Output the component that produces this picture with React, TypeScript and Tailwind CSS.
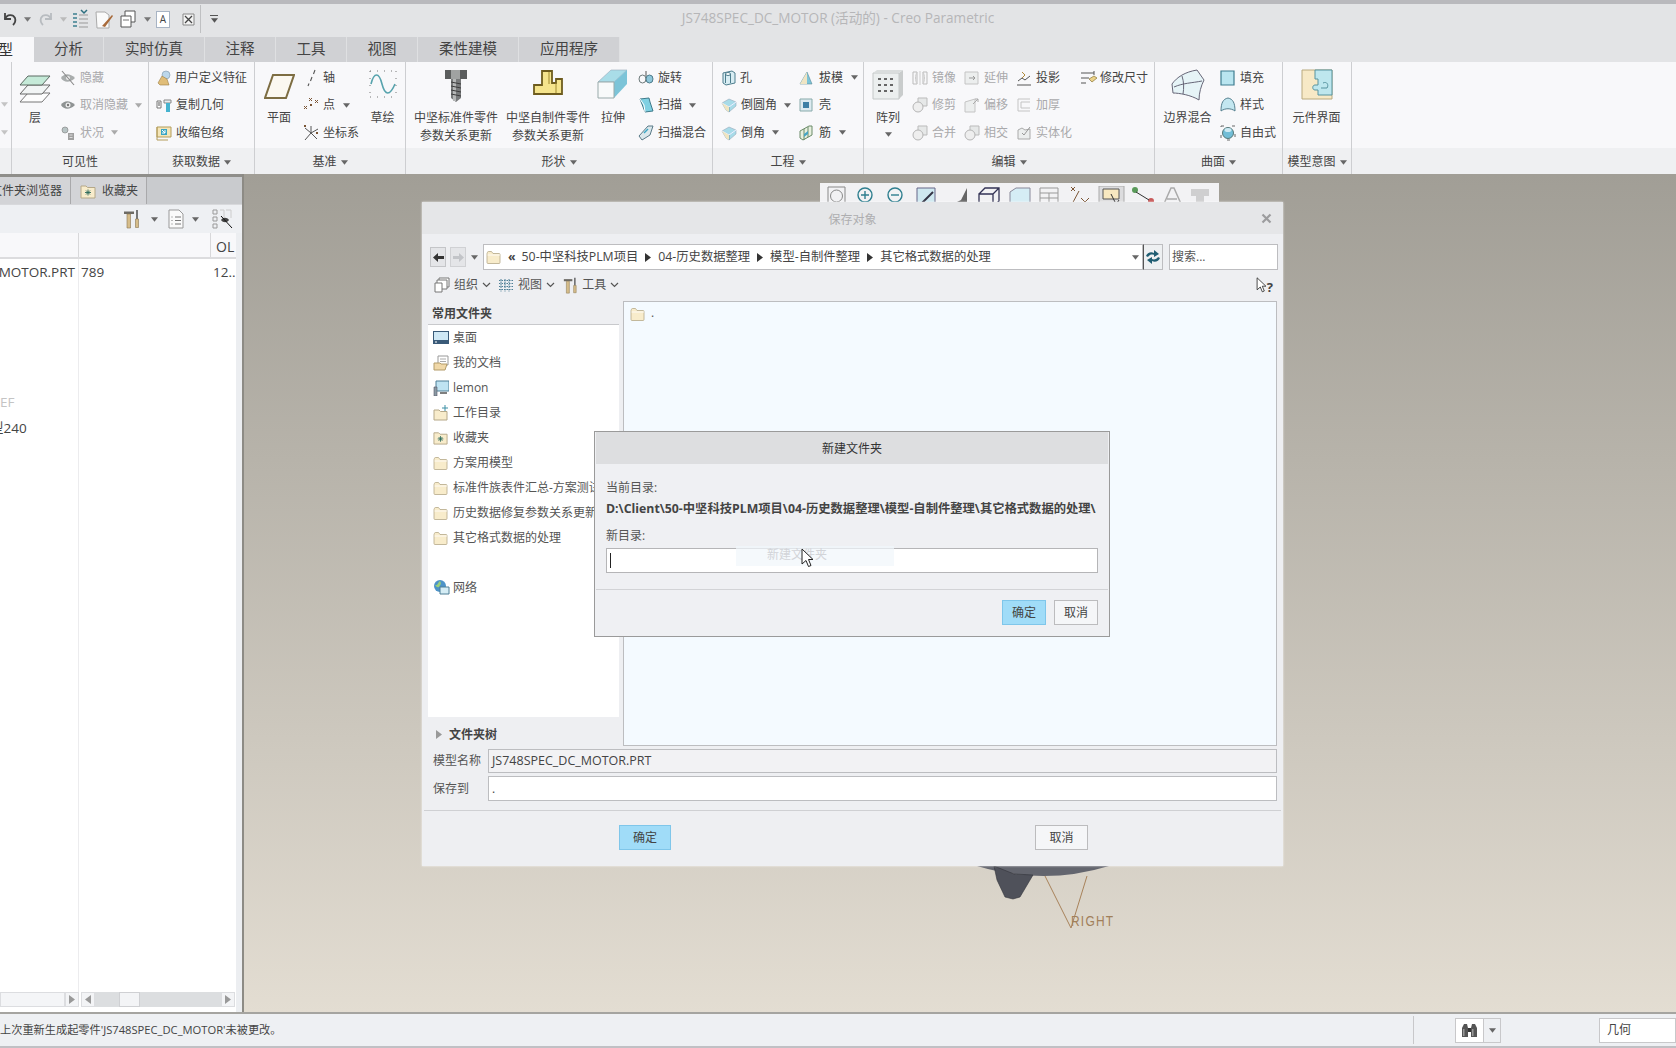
import React from 'react';

const Svg = ({ w = 16, h = 16, vb, children }: { w?: number; h?: number; vb?: string; children: React.ReactNode }) => (
  <svg width={w} height={h} viewBox={vb || `0 0 ${w} ${h}`} fill="none" className="shrink-0">
    {children}
  </svg>
);

const Caret = ({ color = '#666' }: { color?: string }) => (
  <svg width="7" height="5" viewBox="0 0 8 5" className="shrink-0">
    <path d="M0 0h8L4 5z" fill={color} />
  </svg>
);

const Chevron = () => (
  <svg width="9" height="6" viewBox="0 0 9 6" fill="none" className="shrink-0">
    <path d="M1 1l3.500 3.500L8 1" stroke="#555" strokeWidth="1.200" />
  </svg>
);

const Arrow = ({ left = false, color = '#777' }: { left?: boolean; color?: string }) => (
  <svg width="6" height="9" viewBox="0 0 6 9" className="shrink-0">
    <path d={left ? 'M6 0v9L0 4.500z' : 'M0 0v9l6-4.500z'} fill={color} />
  </svg>
);

const Folder = ({ w = 15, h = 14 }: { w?: number; h?: number }) => (
  <Svg w={w} h={h} vb="0 0 15 14">
    <path d="M1 3.500V12.500a1 1 0 001 1h11a1 1 0 001-1V4.500a1 1 0 00-1-1H7L5.500 1.500H2.500a1 1 0 00-1 .8z" fill="#f8eccb" stroke="#b5a888" strokeWidth=".8" />
    <path d="M1.500 5h12.500" stroke="#fff" strokeWidth=".8" />
  </Svg>
);

const Tools = ({ s = 1 }: { s?: number }) => (
  <Svg w={18 * s} h={20 * s} vb="0 0 18 20">
    <path d="M1 2.500h10v2.500H1z" fill="#6c6a64" />
    <path d="M4 5h3.500v14H4z" fill="#d6bd8a" stroke="#8a7650" strokeWidth=".6" />
    <path d="M14 1v9" stroke="#333" strokeWidth="1.300" />
    <path d="M12.500 10h3v8.500h-3z" fill="#d6bd8a" stroke="#8a7650" strokeWidth=".6" />
  </Svg>
);

const DocList = () => (
  <Svg w={16} h={20} vb="0 0 16 20">
    <path d="M1 1h10l4 4v14H1z" fill="#fafafa" stroke="#999" />
    <path d="M3.500 8h1M7 8h6M3.500 11.500h1M7 11.500h6M3.500 15h1M7 15h6" stroke="#777" />
  </Svg>
);

const TreeEye = () => (
  <Svg w={21} h={21}>
    <path d="M1 1h4v4H1zM1 8h4v4H1zM1 15h4v4H1z" stroke="#999" />
    <path d="M8 1h4v9M14 1h5v8" stroke="#ccc" />
    <path d="M9 11c2-3 6-3 8 0-2 3-6 3-8 0z" fill="#444" />
    <path d="M9 7l11 12" stroke="#111" />
  </Svg>
);

const Fav = ({ s = 16 }: { s?: number }) => (
  <Svg w={s} h={s} vb="0 0 16 16">
    <path d="M1 3h5l1.500 1.500H15V15H1z" fill="#f8eccb" stroke="#b5a888" />
    <path d="M5 9.500h6M8 6.500v6M6 7.500l4 4M10 7.500l-4 4" stroke="#2a6a5a" strokeWidth=".9" />
  </Svg>
);

// ---- ribbon icons
const Layers = (
  <Svg w={32} h={30}>
    <path d="M9 19h22l-8 9H1z" fill="#fdfdfd" stroke="#777" />
    <path d="M9 11h22l-8 9H1z" fill="#f2f5f5" stroke="#666" />
    <path d="M9 2h22l-8 9H1z" fill="#c5ead8" stroke="#5c6a62" />
  </Svg>
);
const EyeOff = (
  <Svg>
    <path d="M1 8c3-5 9-5 14 0-5 5-11 5-14 0z" fill="#a9adad" />
    <circle cx="8" cy="8" r="2" fill="#eee" />
    <path d="M2 1l12 14" stroke="#888" strokeWidth="1.100" />
  </Svg>
);
const Eye = (
  <Svg>
    <path d="M1 8c3-5 9-5 14 0-5 5-11 5-14 0z" fill="#8f9393" />
    <circle cx="8" cy="8" r="2.500" fill="#eee" />
    <circle cx="8" cy="8" r="1.200" fill="#777" />
  </Svg>
);
const Status = (
  <Svg>
    <circle cx="5" cy="5" r="3" fill="#b8c4c4" stroke="#888" strokeWidth=".7" />
    <path d="M8 8h6v7H8z" fill="#a0a0a0" />
    <path d="M9.500 10h3M9.500 12.500h3" stroke="#ddd" />
  </Svg>
);
const Udf = (
  <Svg>
    <circle cx="10" cy="5" r="4" fill="#bcd7ea" stroke="#7d96a8" strokeWidth=".6" />
    <path d="M2 13l4-7 5 3 2 6H4z" fill="#e0bd78" stroke="#9b7d45" strokeWidth=".6" />
  </Svg>
);
const CopyGeom = (
  <Svg>
    <path d="M1 4h4v7H1z" fill="#fff" stroke="#777" />
    <path d="M2 6h2M2 8h2" stroke="#555" />
    <path d="M8 3h7v3H8z" fill="#e8eef0" stroke="#888" />
    <path d="M10 6h4v9h-4z" fill="#46b3cf" />
  </Svg>
);
const Shrink = (
  <Svg>
    <path d="M1 2h14v10H1z" fill="#f5e6b8" stroke="#b39c5a" />
    <path d="M1 2v13h11" stroke="#b39c5a" />
    <path d="M5 4h6v6H5z" fill="#3aa5c4" />
    <path d="M6 5l3 3M9 5v3H6" stroke="#fff" />
  </Svg>
);
const Plane = (
  <Svg w={31} h={27}>
    <path d="M9 2h21l-8 23H1z" fill="#fbf8f0" stroke="#7d6d42" strokeWidth="2" />
  </Svg>
);
const Axis = (
  <Svg w={14} h={18}>
    <path d="M11 1L9.500 5M8 8L6.500 12M5 14.500L4 17" stroke="#555" strokeWidth="1.100" />
  </Svg>
);
const Points = (
  <Svg w={17} h={16}>
    <path d="M6 1l3 3M9 1L6 4M12 3l3 3M15 3l-3 3M1 9l3 3M4 9l-3 3M7 7l2 2M9 7L7 9" stroke="#7b5535" />
  </Svg>
);
const Csys = (
  <Svg w={17} h={18}>
    <path d="M8 2v7M8 9l-6 7M8 9l6 6" stroke="#555" />
    <path d="M2 4l6 5 7-4" stroke="#555" />
    <path d="M1 1l2 2M3 1L1 3M13 8l2 2M15 8l-2 2" stroke="#7b5535" />
  </Svg>
);
const Sketch = (
  <Svg w={30} h={30}>
    <path d="M2 2h26M2 28h26M2 2v26M28 2v26" stroke="#777" strokeDasharray="1 6" />
    <path d="M3 15c3-12 8-12 11 0s8 12 13 0" stroke="#57a3ad" strokeWidth="1.600" />
  </Svg>
);
const Bolt = (
  <Svg w={26} h={34}>
    <path d="M2 1h22v9H2z" fill="#5b5d5d" />
    <path d="M8 1h9v9H8z" fill="#a0a2a2" />
    <path d="M8 10h10v19l-5 4-5-4z" fill="#77797a" />
    <path d="M10 10h3v22h-3z" fill="#b5b7b7" />
    <path d="M8 13l10 2M8 17l10 2M8 21l10 2M8 25l10 2" stroke="#3d3d3d" />
  </Svg>
);
const Block = (
  <Svg w={30} h={27}>
    <path d="M1 16h8V2h10v12h4v-4h6v15H1z" fill="#f5e48c" stroke="#6e5c1e" strokeWidth="1.800" />
    <path d="M16 3v12M23 14v10" stroke="#a08a30" />
  </Svg>
);
const Extrude = (
  <Svg w={32} h={30}>
    <path d="M1 13L14 1h16L17 13z" fill="#a9dde8" stroke="#9ab" strokeWidth=".6" />
    <path d="M17 13L30 1v14L17 29z" fill="#7cc4d8" />
    <path d="M1 13h16v16H1z" fill="#f8fafa" stroke="#9aa" />
  </Svg>
);
const Revolve = (
  <Svg>
    <ellipse cx="4.500" cy="9" rx="3.500" ry="4" stroke="#6d7a7a" />
    <ellipse cx="11.500" cy="9" rx="3.500" ry="4" fill="#8fc7da" stroke="#4d7a8a" />
    <path d="M8 1v5" stroke="#555" />
  </Svg>
);
const Sweep = (
  <Svg>
    <path d="M2 2l9-1 1 4 3 9-8 1z" fill="#7fd0e2" stroke="#3d7a8a" />
    <path d="M2 2l4 6 1 7" stroke="#fff" />
  </Svg>
);
const Blend = (
  <Svg>
    <path d="M1 11L10 1h5l-3 9-8 5z" fill="#dbe8ec" stroke="#5a7a88" />
    <path d="M6 8l4-4" stroke="#3aa5c4" strokeWidth="1.500" />
  </Svg>
);
const Hole = (
  <Svg>
    <path d="M2 3l9-2 3 2v10l-9 2-3-2z" fill="#d8edf3" stroke="#4d7d8d" />
    <ellipse cx="7" cy="4" rx="2.500" ry="1.500" fill="#fff" stroke="#4d7d8d" />
    <path d="M4.500 4v9M9.500 4v9" stroke="#4d7d8d" />
  </Svg>
);
const Round = (
  <Svg>
    <path d="M1 6l7-4 7 3v4l-7 6-3-2z" fill="#a8dbe8" stroke="#9ab" strokeWidth=".6" />
    <path d="M1 6l7 4 7-5" stroke="#eef" />
    <path d="M8 10v5" stroke="#69a" />
    <path d="M1 6l4 7 3 2V10z" fill="#f0e5c0" />
  </Svg>
);
const Draft = (
  <Svg>
    <path d="M2 14L9 2l5 12z" fill="#7cc4d8" stroke="#5a8a98" strokeWidth=".6" />
    <path d="M2 14L9 2v12z" fill="#efe5c4" />
  </Svg>
);
const Shell = (
  <Svg>
    <path d="M2 2h12v12H2z" fill="#dceaf0" stroke="#8aa" />
    <path d="M5 5h6v6H5z" fill="#3d7fa5" />
  </Svg>
);
const Rib = (
  <Svg>
    <path d="M2 13V6l9-5h3v9l-9 5z" fill="#e7f0df" stroke="#6a8a68" />
    <path d="M6 4v11M10 2v10" stroke="#6a8a68" />
    <path d="M6 9l4-3v3l-4 3z" fill="#46a5c4" />
  </Svg>
);
const Pattern = (
  <Svg w={32} h={32}>
    <path d="M1 4h26v26H1z" fill="#ecefef" stroke="#c4c8c8" />
    <path d="M27 4l4-3v25l-4 4z" fill="#c9cccc" />
    <path d="M1 4l4-3h26l-4 3z" fill="#dadddd" />
    <path d="M6 10h3M12 10h3M18 10h3M6 16h3M12 16h3M18 16h3M6 22h3M12 22h3M18 22h3" stroke="#666" strokeWidth="2" />
  </Svg>
);
const Mirror = (
  <Svg>
    <path d="M1 2h4v12H1zM11 2h4v12h-4z" stroke="#bbb" />
    <path d="M8 1v14" stroke="#ccc" />
    <path d="M5 2c-2 4-2 8 0 12M11 2c2 4 2 8 0 12" stroke="#ccc" />
  </Svg>
);
const DimCircle = ({ top = false }: { top?: boolean }) => (
  <Svg>
    <path d={top ? 'M6 1h9v8H6z' : 'M6 1h9v9H6z'} fill="#e6e8e8" stroke="#bbb" />
    <circle cx="6" cy="10" r="5" fill="#eeeeee" stroke="#b5b5b5" />
  </Svg>
);
const Extend = (
  <Svg>
    <path d="M1 2h13v12H1z" fill="#eceeee" stroke="#c4c4c4" />
    <path d="M5 8h6M9 6l2 2-2 2" stroke="#999" />
  </Svg>
);
const Offset = (
  <Svg>
    <path d="M1 15V5l10-3v13z" fill="#eceeee" stroke="#c4c4c4" />
    <path d="M9 7l5-5M11 2h3v3" stroke="#aaa" />
  </Svg>
);
const Project = (
  <Svg>
    <path d="M1 15h14" stroke="#555" />
    <path d="M2 11l4-3 3 2 5-4" stroke="#555" />
    <path d="M6 2l3 3-3 3" stroke="#b08a3a" />
  </Svg>
);
const Thicken = (
  <Svg>
    <path d="M2 2h12M2 2v12h12M5 5h9M5 5v6h9" stroke="#c4c4c4" />
  </Svg>
);
const Solidify = (
  <Svg>
    <path d="M2 5l4-2 3 2 5-1v10H2z" fill="#eceeee" stroke="#aaa" />
    <path d="M6 8l2 2 6-8" stroke="#999" />
  </Svg>
);
const Modify = (
  <Svg w={18} h={16}>
    <path d="M1 3h13M1 8h8M1 13h5" stroke="#555" />
    <path d="M14 1v4" stroke="#555" />
    <path d="M9 9l5-3 3 2-5 4z" fill="#ebd28a" stroke="#8a7535" strokeWidth=".7" />
  </Svg>
);
const Boundary = (
  <Svg w={34} h={32}>
    <path d="M1 15C6 8 14 3 26 1l7 10c-3 6-5 13-5 20C20 26 8 24 2 24z" fill="#e6f4f7" stroke="#667" />
    <path d="M11 7c2 6 2 12 1 18M3 18c9-4 18-4 28-6" stroke="#667" />
  </Svg>
);
const Fill = (
  <Svg>
    <path d="M1 1h13v14H1z" fill="#b9e5f0" stroke="#3f7d90" strokeWidth="1.200" />
  </Svg>
);
const Style = (
  <Svg>
    <path d="M1 14c0-8 2-12 7-13 5 1 7 5 7 13-4-3-10-3-14 0z" fill="#c3e7f0" stroke="#55808f" />
  </Svg>
);
const Freestyle = (
  <Svg>
    <path d="M1 1h14v14H1z" stroke="#666" strokeDasharray="3 8" />
    <circle cx="8" cy="8" r="5.500" fill="#72bdd6" stroke="#577" />
    <ellipse cx="8" cy="5" rx="3.500" ry="2" fill="#cfeaf3" />
  </Svg>
);
const Puzzle = (
  <Svg w={32} h={31}>
    <path d="M1 1h30v29H1z" fill="#f7e9c6" stroke="#b9aa7e" />
    <path d="M14 1h17v25H17v-5h-3c-3 0-3-5 0-5h3v-6h-3z" fill="#bee7ee" stroke="#56939f" />
    <path d="M22 14c4-2 6 2 4 5h-6" stroke="#56939f" />
  </Svg>
);

const Group = ({ w, label, caret = true, children }: { w: number; label?: string; caret?: boolean; children?: React.ReactNode }) => (
  <div className="flex flex-col shrink-0 border-r border-[#cdced1] box-border" style={{ width: w }}>
    <div className="flex h-[86px]">{children}</div>
    <div className="h-[26px] pt-[2px] bg-[#eff0f2] flex items-center justify-center gap-1 text-[12px] leading-none text-[#444] box-border">
      {label}
      {label && caret && <Caret />}
    </div>
  </div>
);

const Row = ({ icon, text, dim = false, caret = false, gap = 5 }: { icon?: React.ReactNode; text?: string; dim?: boolean; caret?: boolean; gap?: number }) => (
  <div className="h-[27.500px] flex items-center whitespace-nowrap text-[12px] leading-none" style={{ gap }}>
    {icon}
    <span className={dim ? 'text-[#a9a9ab]' : 'text-[#444]'}>{text}</span>
    {caret && <span className="ml-[3px]"><Caret color={dim ? '#aaa' : '#666'} /></span>}
  </div>
);

const Col = ({ w, children, className = '' }: { w?: number; children?: React.ReactNode; className?: string }) => (
  <div className={`flex flex-col pt-[2px] shrink-0 ${className}`} style={{ width: w }}>
    {children}
  </div>
);

const Big = ({ w, icon, lines, children }: { w: number; icon: React.ReactNode; lines: string[]; children?: React.ReactNode }) => (
  <div className="flex flex-col items-center shrink-0 pt-[7px] text-[12px] leading-[18px] text-[#444] whitespace-nowrap" style={{ width: w }}>
    <div className="h-[40px] flex items-start justify-center">{icon}</div>
    {lines.map(l => (
      <div key={l}>{l}</div>
    ))}
    {children}
  </div>
);

const Ribbon = () => (
  <div className="flex bg-[#f8f8fa] h-[112px] shrink-0">
    <Group w={12} label="">
      <div className="flex flex-col gap-[23px] pt-[40px] pl-[1px]">
        <Caret color="#c4c4c4" />
        <Caret color="#c4c4c4" />
      </div>
    </Group>
    <Group w={137} label="可见性" caret={false}>
      <Big w={46} icon={<div className="mt-[5px]">{Layers}</div>} lines={['层']} />
      <Col className="ml-[2px]">
        <Row icon={EyeOff} text="隐藏" dim gap={4} />
        <Row icon={Eye} text="取消隐藏" dim caret gap={4} />
        <Row icon={Status} text="状况" dim caret gap={4} />
      </Col>
    </Group>
    <Group w={106} label="获取数据">
      <Col className="pl-[7px]">
        <Row icon={Udf} text="用户定义特征" gap={3} />
        <Row icon={CopyGeom} text="复制几何" gap={4} />
        <Row icon={Shrink} text="收缩包络" gap={4} />
      </Col>
    </Group>
    <Group w={151} label="基准">
      <Big w={48} icon={<div className="mt-[4px]">{Plane}</div>} lines={['平面']} />
      <Col w={59}>
        <Row icon={<div className="w-[15px] flex justify-center">{Axis}</div>} text="轴" />
        <Row icon={<div className="w-[15px]">{Points}</div>} text="点" caret />
        <Row icon={<div className="w-[15px]">{Csys}</div>} text="坐标系" />
      </Col>
      <Big w={41} icon={Sketch} lines={['草绘']} />
    </Group>
    <Group w={307} label="形状">
      <div className="w-[4px] shrink-0" />
      <Big w={92} icon={Bolt} lines={['中坚标准件零件', '参数关系更新']} />
      <Big w={92} icon={Block} lines={['中坚自制件零件', '参数关系更新']} />
      <Big w={38} icon={Extrude} lines={['拉伸']} />
      <Col className="ml-[6px]">
        <Row icon={Revolve} text="旋转" gap={4} />
        <Row icon={Sweep} text="扫描" gap={4} caret />
        <Row icon={Blend} text="扫描混合" gap={4} />
      </Col>
    </Group>
    <Group w={151} label="工程">
      <Col w={85} className="pl-[8px]">
        <Row icon={Hole} text="孔" gap={3} />
        <Row icon={Round} text="倒圆角" gap={4} caret />
        <Row icon={Round} text="倒角" gap={4} caret />
      </Col>
      <Col>
        <Row icon={Draft} text="拔模" caret />
        <Row icon={Shell} text="壳" />
        <Row icon={Rib} text="筋" caret />
      </Col>
    </Group>
    <Group w={291} label="编辑">
      <Big w={48} icon={Pattern} lines={['阵列']}>
        <div className="mt-[5px]"><Caret /></div>
      </Big>
      <Col w={52}>
        <Row icon={Mirror} text="镜像" dim gap={4} />
        <Row icon={<DimCircle top />} text="修剪" dim gap={4} />
        <Row icon={<DimCircle />} text="合并" dim gap={4} />
      </Col>
      <Col w={52}>
        <Row icon={Extend} text="延伸" dim gap={4} />
        <Row icon={Offset} text="偏移" dim gap={4} />
        <Row icon={<DimCircle />} text="相交" dim gap={4} />
      </Col>
      <Col w={64}>
        <Row icon={Project} text="投影" gap={4} />
        <Row icon={Thicken} text="加厚" dim gap={4} />
        <Row icon={Solidify} text="实体化" dim gap={4} />
      </Col>
      <Col>
        <Row icon={Modify} text="修改尺寸" gap={2} />
      </Col>
    </Group>
    <Group w={128} label="曲面">
      <Big w={65} icon={Boundary} lines={['边界混合']} />
      <Col>
        <Row icon={Fill} text="填充" gap={4} />
        <Row icon={Style} text="样式" gap={4} />
        <Row icon={Freestyle} text="自由式" gap={4} />
      </Col>
    </Group>
    <Group w={69} label="模型意图">
      <Big w={67} icon={Puzzle} lines={['元件界面']} />
    </Group>
    <div className="flex-1 flex flex-col">
      <div className="h-[86px]" />
      <div className="h-[26px] bg-[#eff0f2]" />
    </div>
  </div>
);

const Undo = ({ c = '#444' }: { c?: string }) => (
  <Svg>
    <path d="M3 2v6h6" stroke={c} strokeWidth="1.800" />
    <path d="M3 8c2-5 8-5 10-1 1 3 0 5-2 7" stroke={c} strokeWidth="1.800" />
  </Svg>
);

const QuickBar = () => (
  <div className="flex items-center h-[30px]">
    <div className="w-[2px]" />
    <Undo />
    <div className="ml-[6px]"><Caret color="#777" /></div>
    <div className="ml-[7px] -scale-x-100"><Undo c="#b8bcc0" /></div>
    <div className="ml-[6px]"><Caret color="#bbb" /></div>
    <div className="ml-[5px]">
      <Svg w={17} h={20}>
        <path d="M1 5h4M1 9h4M1 13h4M1 17h4" stroke="#3d7f90" strokeWidth="1.500" />
        <path d="M7 6h9M7 10h9M7 14h9M7 18h9" stroke="#999" />
        <path d="M9 1l3 3 3-3" stroke="#2d6f80" strokeWidth="1.500" />
      </Svg>
    </div>
    <div className="ml-[6px]">
      <Svg w={19} h={21}>
        <path d="M1 3h9l4 3v13H2z" fill="#fafafa" stroke="#aaa" />
        <path d="M7 17L17 6l1 1-8 11z" fill="#a86a3a" />
      </Svg>
    </div>
    <div className="ml-[6px]">
      <Svg w={16} h={18}>
        <path d="M5 1h10v11H5z" fill="#fff" stroke="#555" />
        <path d="M1 6h10v11H1z" fill="#fff" stroke="#555" />
        <path d="M3 10h6" stroke="#777" />
      </Svg>
    </div>
    <div className="ml-[8px]"><Caret color="#777" /></div>
    <div className="ml-[5px] w-[14px] h-[17px] bg-white border border-[#a8b4c4] text-[10px] leading-[15px] text-center text-[#444]">A</div>
    <div className="ml-[12px]">
      <Svg w={13} h={13}>
        <path d="M1 1h11v11H1z" fill="#f4f4f4" stroke="#888" />
        <path d="M3 3l7 7M10 3l-7 7" stroke="#444" strokeWidth="1.300" />
      </Svg>
    </div>
    <div className="ml-[5px] h-[28px] w-px bg-[#bfc0c2]" />
    <div className="ml-[9px] flex flex-col items-center gap-[2px]">
      <div className="w-[8px] h-px bg-[#555]" />
      <Caret color="#555" />
    </div>
  </div>
);

const tabs: [string, number][] = [
  ['分析', 70],
  ['实时仿真', 101],
  ['注释', 71],
  ['工具', 71],
  ['视图', 71],
  ['柔性建模', 101],
  ['应用程序', 101],
];

const Header = () => (
  <div className="shrink-0 bg-[#e3e4e6]">
    <div className="h-[4px] bg-[#b9b9bd]" />
    <div className="grid grid-cols-[1fr_auto_1fr] items-start h-[33px]">
      <QuickBar />
      <div className="text-[13.600px] leading-[28px] text-[#b6b6b8] whitespace-nowrap">JS748SPEC_DC_MOTOR (活动的) - Creo Parametric</div>
      <div />
    </div>
    <div className="flex h-[25px]">
      <div className="w-[34px] bg-[#f8f8fa] overflow-hidden flex justify-end pr-[21px] items-center whitespace-nowrap text-[15px] leading-none text-[#333]">模型</div>
      {tabs.map(([t, w]) => (
        <div key={t} className="bg-[#d0d1d4] border-r border-[#dfe0e2] flex items-center justify-center text-[14.500px] leading-none text-[#444] box-border" style={{ width: w }}>
          {t}
        </div>
      ))}
    </div>
  </div>
);

const ScrollBtn = ({ left = false }: { left?: boolean }) => (
  <div className="w-[14px] h-[15px] bg-[#f3f4f6] border border-[#dcdde0] flex items-center justify-center box-border">
    <Arrow left={left} color="#999" />
  </div>
);

const LeftPanel = () => (
  <div className="w-[244px] shrink-0 bg-[#eceef1] border-r-2 border-[#8d8b85] flex flex-col box-border text-[#444]">
    <div className="h-[3px] bg-[#8f8e8a]" />
    <div className="h-[28px] bg-[#c9cbce] flex border-b border-[#d8d9dc] box-border">
      <div className="w-[71px] bg-[#d3d4d7] border-r border-[#a9a9ab] overflow-hidden flex justify-end items-center pr-[8px] whitespace-nowrap text-[12px] leading-none box-border">文件夹浏览器</div>
      <div className="w-[76px] bg-[#d3d4d7] border-r border-[#a9a9ab] flex items-center gap-[6px] pl-[9px] text-[12px] leading-none box-border">
        <Fav />
        <span>收藏夹</span>
      </div>
    </div>
    <div className="h-[28px] flex items-center justify-end pr-[9px] bg-[#eef0f3]">
      <Tools />
      <div className="ml-[10px]"><Caret /></div>
      <div className="ml-[10px]"><DocList /></div>
      <div className="ml-[8px]"><Caret /></div>
      <div className="ml-[13px]"><TreeEye /></div>
    </div>
    <div className="flex-1 flex flex-col w-[236px] bg-white">
      <div className="h-[26px] flex bg-[#f8f8fa] border-b-2 border-[#dcdcde] box-border shrink-0">
        <div className="w-[79px] border-r border-[#d8d8da]" />
        <div className="w-[132px] border-r border-[#d8d8da]" />
        <div className="flex-1 overflow-hidden pl-[5px] pt-[3px] text-[14px] leading-[22px] whitespace-nowrap">OL</div>
      </div>
      <div className="flex-1 flex text-[13.500px] leading-[24px]">
        <div className="w-[79px] border-r border-[#ececee] overflow-hidden">
          <div className="flex justify-end whitespace-nowrap pr-[3px] pt-[1px]">JS748SPEC_DC_MOTOR.PRT</div>
          <div className="mt-[106px] text-[#c4c4c4] whitespace-nowrap">EF</div>
          <div className="mt-[2px] -ml-[10px] whitespace-nowrap">型240</div>
        </div>
        <div className="w-[132px] pl-[2px] pt-[1px]">789</div>
        <div className="flex-1 overflow-hidden pl-[2px] pt-[1px]">12..</div>
      </div>
      <div className="h-[20px] flex items-start bg-white shrink-0">
        <div className="w-[65px] h-[15px] bg-[#f4f5f7] border border-[#dcdde0] box-border" />
        <ScrollBtn />
        <div className="w-[2px]" />
        <ScrollBtn left />
        <div className="w-[126px] h-[15px] bg-[#dcdee0] pl-[24px]">
          <div className="w-[21px] h-[15px] bg-[#f3f4f6] border border-[#cfd0d3] box-border" />
        </div>
        <ScrollBtn />
      </div>
    </div>
  </div>
);

const desktop = (
  <Svg w={16} h={13}>
    <path d="M0 0h16v13H0z" fill="#3a5a78" />
    <path d="M1 1h14v8H1z" fill="#cfe8f5" />
    <path d="M2 11h2" stroke="#fff" />
  </Svg>
);
const docs = (
  <Svg w={16} h={16}>
    <path d="M5 1h10v9H5z" fill="#fff" stroke="#999" />
    <path d="M7 4h6M7 6.500h6" stroke="#aaa" />
    <path d="M1 8h6l1 1h6l-2 6H1z" fill="#f0d8a8" stroke="#b39c6a" />
  </Svg>
);
const computer = (
  <Svg w={16} h={16}>
    <path d="M3 1h13v10H3z" fill="#bfe3f2" stroke="#4f7f96" />
    <path d="M1 7h3v9H1z" fill="#8a9aa4" stroke="#556" strokeWidth=".6" />
    <path d="M7 13h7" stroke="#555" strokeWidth="1.500" />
  </Svg>
);
const workdir = (
  <Svg w={16} h={16}>
    <path d="M1 5h5l1.500 1.500H14V15H1z" fill="#f8eccb" stroke="#b5a888" />
    <path d="M12 0v6M9 3h6" stroke="#3d8fa5" />
  </Svg>
);
const network = (
  <Svg w={17} h={17}>
    <circle cx="7" cy="7" r="6" fill="#4d93c8" />
    <path d="M2 6c3 1 3-3 5-4 2 3 0 4-1 6-2 1-3-1-4-2z" fill="#9ad07a" />
    <path d="M7 8h9v7H7z" fill="#d5edf5" stroke="#4f7f96" />
  </Svg>
);

const places: [React.ReactNode, string][] = [
  [desktop, '桌面'],
  [docs, '我的文档'],
  [computer, 'lemon'],
  [workdir, '工作目录'],
  [<Fav key="f" s={15} />, '收藏夹'],
  [<Folder key="a" />, '方案用模型'],
  [<Folder key="b" />, '标准件族表件汇总-方案测试'],
  [<Folder key="c" />, '历史数据修复参数关系更新'],
  [<Folder key="d" />, '其它格式数据的处理'],
];

const Place = ({ icon, text }: { icon: React.ReactNode; text: string }) => (
  <div className="h-[25px] flex items-center whitespace-nowrap text-[12px] leading-none text-[#555]">
    <div className="w-[25px] pl-[5px] shrink-0">{icon}</div>
    <span>{text}</span>
  </div>
);

const Crumb = ({ text }: { text: string }) => <span>{text}</span>;

const Cursor = ({ small = false }: { small?: boolean }) => (
  <svg width={small ? 11 : 13} height={small ? 16 : 20} viewBox="0 0 13 20" className="shrink-0">
    <path d="M1 1v15l4-3.500 2.500 6 2.500-1-2.500-6H12z" fill="#fff" stroke="#222" />
  </svg>
);

const NewFolderDialog = () => (
  <div className="absolute left-[172px] top-[229px] w-[516px] h-[206px] bg-[#eff0f3] border border-[#9a9a9a] box-border flex flex-col text-[#555] text-[12px] leading-none">
    <div className="h-[32px] pt-[2px] box-border mx-[1px] bg-[#dddee0] flex items-center justify-center text-[#333] shrink-0">新建文件夹</div>
    <div className="pl-[11px] pr-[11px] flex flex-col flex-1">
      <div className="h-[18px] mt-[15px] flex items-center">当前目录:</div>
      <div className="h-[18px] mt-[3px] flex items-center font-bold text-[#444] whitespace-nowrap text-[12.300px]">D:\Client\50-中坚科技PLM项目\04-历史数据整理\模型-自制件整理\其它格式数据的处理\</div>
      <div className="h-[18px] mt-[9px] flex items-center">新目录:</div>
      <div className="h-[25px] mt-[3px] bg-white border border-[#b5b5b7] box-border flex items-center pl-[3px]">
        <div className="w-px h-[15px] bg-[#222]" />
      </div>
    </div>
    <div className="mx-[1px] border-t border-[#d2d3d6] h-[47px] flex items-start justify-end gap-[8px] pr-[10px] pt-[10px] shrink-0 box-border">
      <button className="w-[44px] h-[25px] bg-[#a0dcf8] border border-[#7fc6ea] box-border text-[#444] text-[12px]">确定</button>
      <button className="w-[44px] h-[25px] bg-[#f5f6f8] border border-[#bcbcbe] box-border text-[#444] text-[12px]">取消</button>
    </div>
    <div className="absolute left-[141px] top-[114px] w-[158px] h-[20px] pr-[36px] pb-[3px] box-border bg-[#f1f6fb]/70 flex items-center justify-center text-[#d2d4d8] text-[12px]">新建文件夹</div>
    <div className="absolute left-[206px] top-[116px]"><Cursor /></div>
  </div>
);

const SaveDialog = () => (
  <div className="absolute left-[178px] top-[28px] w-[861px] h-[664px] bg-[#eeeff2] flex flex-col text-[#555] text-[12px] leading-none shadow-[0_0_2px_rgba(255,255,255,0.8)]">
    <div className="h-[32px] pt-[3px] box-border bg-[#e5e6e8] relative flex items-center justify-center text-[#aeaeb0] shrink-0">
      保存对象
      <div className="absolute right-[11px] top-[11px]">
        <svg width="11" height="11" viewBox="0 0 11 11">
          <path d="M1.500 1.500l8 8M9.500 1.500l-8 8" stroke="#9c9c9e" strokeWidth="2.200" />
        </svg>
      </div>
    </div>
    <div className="h-[26px] mt-[10px] ml-[8px] mr-[5px] flex items-center shrink-0">
      <div className="w-[16px] h-[20px] bg-[#e4e5e8] border border-[#c4c5c8] flex items-center justify-center box-border">
        <Svg w={11} h={9}><path d="M0 4.500L5 0v3h6v3H5v3z" fill="#333" /></Svg>
      </div>
      <div className="ml-[4px] w-[16px] h-[20px] bg-[#e4e5e8] border border-[#d0d1d4] flex items-center justify-center box-border">
        <Svg w={11} h={9}><path d="M11 4.500L6 0v3H0v3h6v3z" fill="#c2c4c8" /></Svg>
      </div>
      <div className="ml-[5px]"><Caret /></div>
      <div className="ml-[5px] w-[660px] h-[26px] bg-white border border-[#bdbdc0] box-border flex items-center pl-[2px] text-[12.300px] text-[#444] whitespace-nowrap">
        <Folder />
        <span className="ml-[7px] mr-[6px] font-bold">«</span>
        <Crumb text="50-中坚科技PLM项目" />
        <span className="mx-[7px]"><Arrow color="#333" /></span>
        <Crumb text="04-历史数据整理" />
        <span className="mx-[7px]"><Arrow color="#333" /></span>
        <Crumb text="模型-自制件整理" />
        <span className="mx-[7px]"><Arrow color="#333" /></span>
        <Crumb text="其它格式数据的处理" />
        <span className="ml-auto mr-[3px]"><Caret /></span>
      </div>
      <div className="w-[20px] h-[26px] bg-[#eef0f2] border border-[#bdbdc0] border-l-[#555] box-border flex items-center justify-center">
        <Svg w={16} h={14}>
          <path d="M1 6c1-3 5-5 8-3V0l5 4-5 3V5C7 4 4 5 3 7z" fill="#1f5d72" />
          <path d="M15 8c-1 3-5 5-8 3v3L2 10l5-3v2c2 1 5 0 6-2z" fill="#1f5d72" />
        </Svg>
      </div>
      <div className="ml-[6px] flex-1 h-[26px] bg-white border border-[#bdbdc0] box-border flex items-center pl-[2px] text-[#555]">搜索...</div>
    </div>
    <div className="h-[26px] mt-[2px] ml-[12px] mr-[10px] flex items-center shrink-0">
      <Svg w={16} h={16}>
        <path d="M5 1h10v9H5z" fill="#fff" stroke="#777" />
        <path d="M3 3h10v9H3z" fill="#fff" stroke="#777" />
        <path d="M1 6h7v9H1z" fill="#fff" stroke="#777" />
      </Svg>
      <span className="ml-[4px]">组织</span>
      <span className="ml-[4px]"><Chevron /></span>
      <div className="ml-[8px]">
        <Svg w={14} h={13}>
          <path d="M0 1.500h14M0 4.500h14M0 7.500h14M0 10.500h14M2 0v13M6 0v13M10 0v13" stroke="#4f7f96" strokeDasharray="1.500 1" />
        </Svg>
      </div>
      <span className="ml-[5px]">视图</span>
      <span className="ml-[4px]"><Chevron /></span>
      <div className="ml-[8px]"><Tools s={0.85} /></div>
      <span className="ml-[4px]">工具</span>
      <span className="ml-[4px]"><Chevron /></span>
      <div className="ml-auto flex items-center">
        <Cursor small />
        <span className="font-bold text-[13px] text-[#444] mt-[5px]">?</span>
      </div>
    </div>
    <div className="flex-1 flex mt-[3px] ml-[6px] mr-[6px] min-h-0">
      <div className="w-[191px] flex flex-col shrink-0">
        <div className="h-[24px] pt-[3px] box-border flex items-center pl-[4px] font-bold text-[#444] border-b border-[#c8c9cc]">常用文件夹</div>
        <div className="flex-1 bg-white overflow-hidden">
          {places.map(([i, t]) => (
            <Place key={t} icon={i} text={t} />
          ))}
          <div className="h-[25px]" />
          <Place icon={network} text="网络" />
        </div>
        <div className="h-[29px] pt-[6px] box-border flex items-center pl-[8px] gap-[7px] font-bold text-[#444] shrink-0">
          <Arrow color="#999" />
          文件夹树
        </div>
      </div>
      <div className="ml-[4px] flex-1 bg-[#f4faff] border border-[#bcbdc0] box-border pl-[6px] pt-[5px] flex items-start gap-[6px] text-[#555]">
        <Folder />
        <span>.</span>
      </div>
    </div>
    <div className="h-[24px] mt-[3px] ml-[11px] mr-[6px] flex items-center shrink-0">
      <span className="w-[55px]">模型名称</span>
      <div className="flex-1 h-[24px] bg-[#f2f2f4] border border-[#bcbdc0] box-border flex items-center pl-[3px] text-[12.500px] text-[#444]">JS748SPEC_DC_MOTOR.PRT</div>
    </div>
    <div className="h-[25px] mt-[3px] ml-[11px] mr-[6px] flex items-center shrink-0">
      <span className="w-[55px]">保存到</span>
      <div className="flex-1 h-[25px] bg-white border border-[#bcbdc0] box-border flex items-center pl-[3px] text-[#444]">.</div>
    </div>
    <div className="h-px mt-[9px] mx-[2px] bg-[#cfd0d3] shrink-0" />
    <div className="h-[55px] flex items-start pt-[14px] pl-[197px] shrink-0 box-border">
      <button className="w-[52px] h-[25px] bg-[#a0dcf8] border border-[#7fc6ea] box-border text-[#444] text-[12px]">确定</button>
      <button className="ml-[364px] w-[53px] h-[25px] bg-[#f5f6f8] border border-[#bcbcbe] box-border text-[#444] text-[12px]">取消</button>
    </div>
    <NewFolderDialog />
  </div>
);

const ViewToolbar = () => (
  <div className="absolute left-[576px] top-[9px] w-[399px] h-[30px] bg-[#f2f2f4] flex items-start pt-[3px] pl-[7px]">
    <svg width="390" height="22" viewBox="0 0 390 22" fill="none">
      <path d="M1 1h17v18H1z" stroke="#888" /><circle cx="9.500" cy="10" r="6" stroke="#888" />
      <circle cx="38" cy="9" r="7" stroke="#2f7f8f" strokeWidth="1.400" /><path d="M34 9h8M38 5v8" stroke="#2f7f8f" strokeWidth="1.400" />
      <circle cx="68" cy="9" r="7" stroke="#2f7f8f" strokeWidth="1.400" /><path d="M64 9h8" stroke="#2f7f8f" strokeWidth="1.400" />
      <path d="M90 2h18v18H90z" fill="#cfe8f0" stroke="#668" /><path d="M94 18L106 6" stroke="#334" strokeWidth="2" />
      <path d="M126 18l8-4 6-12v18z" fill="#666" />
      <path d="M152 8h14v13h-14zM152 8l6-6h14v13l-6 6M166 8l6-6" stroke="#335" strokeWidth="1.300" />
      <path d="M183 6l6-4h14v18h-20z" fill="#d5edf5" stroke="#889" />
      <path d="M213 2h18v17h-18zM213 7h18M213 12h18M222 7v12" stroke="#999" />
      <path d="M244 1l4 4M248 1l-4 4M252 5l-8 15M254 12l8 8M262 12l-8 8" stroke="#7b5535" />
      <path d="M272 0h25v21h-25z" fill="#dcdcde" stroke="#aaa" /><path d="M276 3h16v10h-16z" fill="#f8e8c0" stroke="#555" /><path d="M284 8l6 12M288 20l4-6" stroke="#333" />
      <circle cx="308" cy="4" r="3" fill="#5a9a5a" /><circle cx="324" cy="15" r="3" fill="#c85a5a" /><path d="M309 6l13 8" stroke="#333" />
      <path d="M336 20L344 2h3l8 18M340 13h10" stroke="#aaa" strokeWidth="1.500" />
      <path d="M364 3h18v7h-5v10h-8V10h-5z" fill="#cfcfd0" />
    </svg>
  </div>
);

const Model = () => (
  <div className="absolute left-[730px] top-[692px]">
    <svg width="150" height="70" viewBox="0 0 150 70" fill="none">
      <path d="M3 0Q70 20 135 0z" fill="#63656e" />
      <path d="M20 0l3 14 8 17 8 2 7-2 13-22-19-1z" fill="#4f515a" stroke="#33343a" strokeWidth=".6" />
      <path d="M71 10l26 52 16-52" stroke="#a8825a" />
    </svg>
  </div>
);

const Canvas = () => (
  <div className="flex-1 relative bg-gradient-to-b from-[#a19e96] to-[#e3ddd2] overflow-hidden">
    <ViewToolbar />
    <Model />
    <div className="absolute left-[827px] top-[739px] tracking-[1.500px] text-[15px] leading-none text-[#a17f5a] origin-left scale-x-[0.8] font-['Liberation_Sans',sans-serif]">RIGHT</div>
    <SaveDialog />
  </div>
);

const StatusBar = () => (
  <div className="h-[36px] shrink-0 bg-[#eef0f3] border-t-2 border-b-2 border-t-[#a5a4a0] border-b-[#c0c0c4] flex items-center box-border relative text-[12px] leading-none text-[#444]">
    <div className="w-[1414px] shrink-0 whitespace-nowrap border-r border-[#c8c8ca] h-[28px] flex items-center text-[11.200px]">上次重新生成起零件'JS748SPEC_DC_MOTOR'未被更改。</div>
    <div className="ml-[41px] w-[46px] h-[25px] border border-[#c8c8ca] flex box-border">
      <div className="w-[28px] flex items-center justify-center border-r border-[#c8c8ca] bg-white">
        <Svg w={17} h={15}>
          <path d="M1 5l2-4h3l1 4v9H1zM10 5l1-4h3l2 4v9h-6z" fill="#555" />
          <path d="M7 5h3v4H7z" fill="#333" />
          <path d="M2 6h1.500v7H2zM11 6h1.500v7H11z" fill="#999" />
        </Svg>
      </div>
      <div className="flex-1 flex items-center justify-center"><Caret /></div>
    </div>
    <div className="ml-[98px] flex-1 h-[25px] bg-white border border-[#c8c8ca] box-border flex items-center pl-[7px]">几何</div>
  </div>
);

export default function App() {
  return (
    <div className="w-[1676px] h-[1048px] overflow-hidden flex flex-col bg-[#e3e4e6] font-['Open_Sans','Noto_Sans_CJK_SC',sans-serif]">
      <Header />
      <Ribbon />
      <div className="flex-1 flex min-h-0">
        <LeftPanel />
        <Canvas />
      </div>
      <StatusBar />
    </div>
  );
}
